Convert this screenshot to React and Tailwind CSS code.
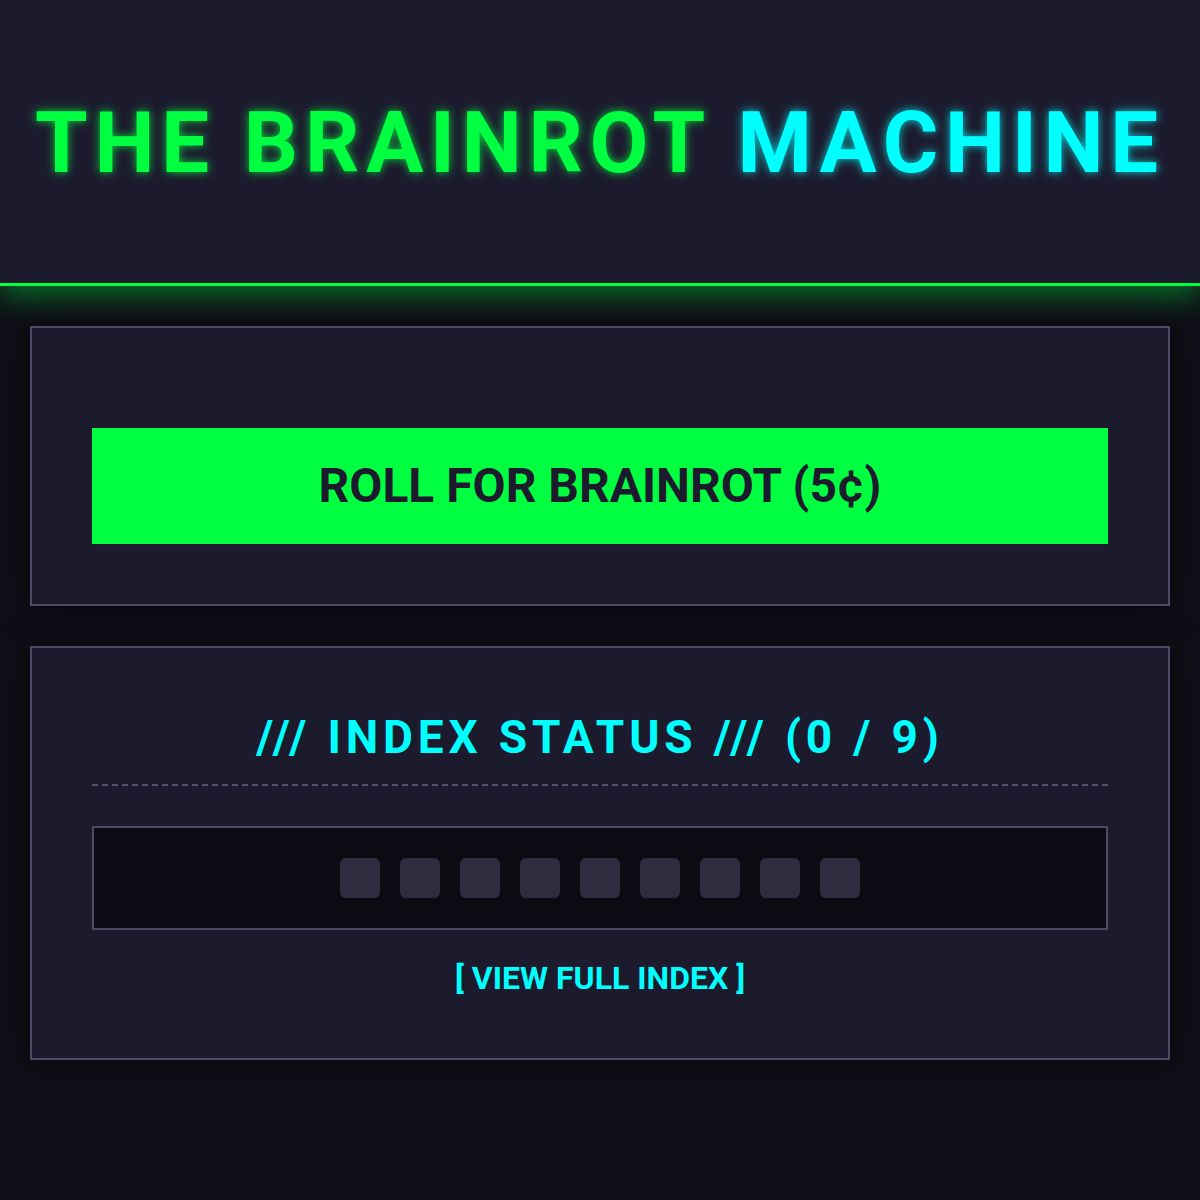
import React from "react";

const slots = Array.from({ length: 9 }, (_, i) => i);

const App = () => {
  return (
    <div className="min-h-[1200px] bg-[#0f0f18] font-['Roboto','Liberation_Sans',sans-serif]">
      <header className="h-[286px] bg-[#1c1b2e] border-b-[3px] border-[#00ff41] shadow-[0_8px_30px_rgba(0,255,65,0.45)] flex items-center justify-center">
        <h1 className="text-[85px] font-bold tracking-[0.08em] leading-none mt-[4px] whitespace-nowrap">
          <span className="text-[#00ff41] [text-shadow:0_0_10px_rgba(0,255,65,0.8)]">THE BRAINROT </span>
          <span className="text-[#00ffff] [text-shadow:0_0_10px_rgba(0,255,255,0.8)]">MACHINE</span>
        </h1>
      </header>

      <main className="px-[30px] pt-[40px] flex flex-col gap-[40px]">
        {/* roll panel */}
        <section className="bg-[#1c1b2e] border-2 border-[#4d4a68] shadow-[0_0_30px_rgba(0,0,0,0.6)] px-[60px] pt-[100px] pb-[60px]">
          <button className="w-full h-[116px] bg-[#00ff41] text-[#1c1b2e] text-[48px] font-bold">
            ROLL FOR BRAINROT (5¢)
          </button>
        </section>

        {/* index panel */}
        <section className="bg-[#1c1b2e] border-2 border-[#4d4a68] shadow-[0_0_30px_rgba(0,0,0,0.6)] px-[60px] pt-[59px] pb-[60px]">
          <h2 className="text-center text-[46px] font-bold text-[#00ffff] tracking-[0.105em] leading-[60px] pb-[17px] border-b-2 border-dashed border-[#55536d]">
            /// INDEX STATUS /// (0 / 9)
          </h2>
          <div className="mt-[40px] bg-[#0b0b14] border-2 border-[#4d4a68] py-[30px] flex justify-center gap-[20px]">
            {slots.map((i) => (
              <div key={i} className="w-[40px] h-[40px] rounded-[6px] bg-[#2e2d40]" />
            ))}
          </div>
          <div className="mt-[28px] text-center">
            <a className="text-[#00ffff] text-[32px] font-bold tracking-[0em] leading-[40px]">
              [ VIEW FULL INDEX ]
            </a>
          </div>
        </section>
      </main>
    </div>
  );
};

export default App;
